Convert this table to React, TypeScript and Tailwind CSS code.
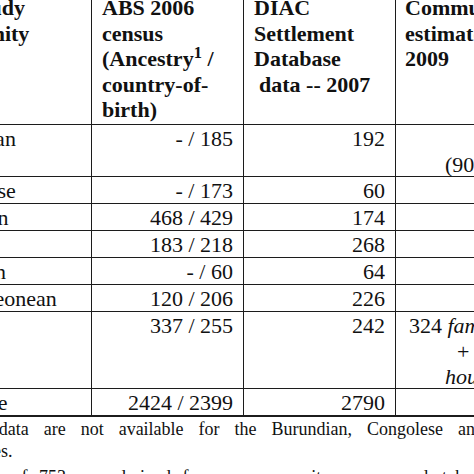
import React from 'react'

type Row = {
	h: string
	name: string
	abs: string
	diac: string
	comm?: React.ReactNode
}

const rows: Row[] = [
	{
		h: 'h-[52px]',
		name: 'Burundian',
		abs: '- / 185',
		diac: '192',
		comm: (
			<>
				<div className="pl-[110px]">
					753<sup>2</sup>
				</div>
				<div className="pl-[49px]">(90 households)</div>
			</>
		),
	},
	{ h: 'h-[27px]', name: 'Congolese', abs: '- / 173', diac: '60' },
	{ h: 'h-[27px]', name: 'Ethiopian', abs: '468 / 429', diac: '174' },
	{ h: 'h-[27px]', name: 'Liberian', abs: '183 / 218', diac: '268' },
	{ h: 'h-[27px]', name: 'Rwandan', abs: '- / 60', diac: '64' },
	{ h: 'h-[27px]', name: 'Sierra Leonean', abs: '120 / 206', diac: '226' },
	{
		h: 'h-[77px]',
		name: 'Somali',
		abs: '337 / 255',
		diac: '242',
		comm: (
			<>
				<div className="pl-[13px]">
					324 <i>families</i>
				</div>
				<div className="pl-[61px]">+ 92</div>
				<div className="pl-[49px]">
					<i>households</i>
				</div>
			</>
		),
	},
]

const line = 'border-[#1c1c1c]'

const App = () => {
	return (
		<div className="w-[474px] h-[474px] overflow-hidden bg-white text-[#111] font-['Liberation_Serif',serif]">
			<div className="ml-[-88px] w-[700px] text-[22px] leading-[25.5px]">
				{/* header */}
				<div className={`flex mt-[-5px] h-[130px] border-b ${line} font-bold`}>
					<div className={`w-[180px] shrink-0 border-r ${line} pl-[11px]`}>
						<div>Case study</div>
						<div>community</div>
					</div>
					<div className={`w-[152px] shrink-0 border-r ${line} pl-[10px]`}>
						<div>ABS 2006</div>
						<div>census</div>
						<div>
							(Ancestry<sup>1</sup> /
						</div>
						<div>country-of-</div>
						<div>birth)</div>
					</div>
					<div className={`w-[152px] shrink-0 border-r ${line} pl-[10px]`}>
						<div>DIAC</div>
						<div>Settlement</div>
						<div>Database</div>
						<div className="pl-[5px]">data -- 2007</div>
					</div>
					<div className="w-[200px] shrink-0 pl-[9px]">
						<div>Community</div>
						<div>estimates</div>
						<div>2009</div>
					</div>
				</div>

				{rows.map((r) => (
					<div key={r.name} className={`flex border-b ${line} ${r.h}`}>
						<div className={`w-[180px] shrink-0 border-r ${line} pl-[11px] pt-[1px]`}>{r.name}</div>
						<div className={`w-[152px] shrink-0 border-r ${line} pr-[10px] pt-[1px] text-right`}>{r.abs}</div>
						<div className={`w-[152px] shrink-0 border-r ${line} pr-[10px] pt-[1px] text-right`}>{r.diac}</div>
						<div className="w-[200px] shrink-0 pt-[1px]">{r.comm}</div>
					</div>
				))}

				{/* total */}
				<div className={`flex border-b-2 ${line} h-[28px]`}>
					<div className={`w-[180px] shrink-0 border-r ${line} pl-[11px] pt-[1px]`}>Total size</div>
					<div className={`w-[152px] shrink-0 border-r ${line} pr-[10px] pt-[1px] text-right`}>2424 / 2399</div>
					<div className={`w-[152px] shrink-0 border-r ${line} pr-[10px] pt-[1px] text-right`}>2790</div>
					<div className="w-[200px] shrink-0" />
				</div>

				{/* footnotes */}
				<div className="text-[18px] leading-[22px] mt-[1px]">
					<div className="w-[572px] text-justify [text-align-last:justify]">
						<sup>1</sup>Ancestry data are not available for the Burundian, Congolese and
					</div>
					<div className="pl-[3px]">communities.</div>
					<div className="w-[632px] mt-[4px] text-justify [text-align-last:justify]">
						<sup>2</sup>The figure of 753 was derived from a community census undertaken by the
					</div>
				</div>
			</div>
		</div>
	)
}

export default App
